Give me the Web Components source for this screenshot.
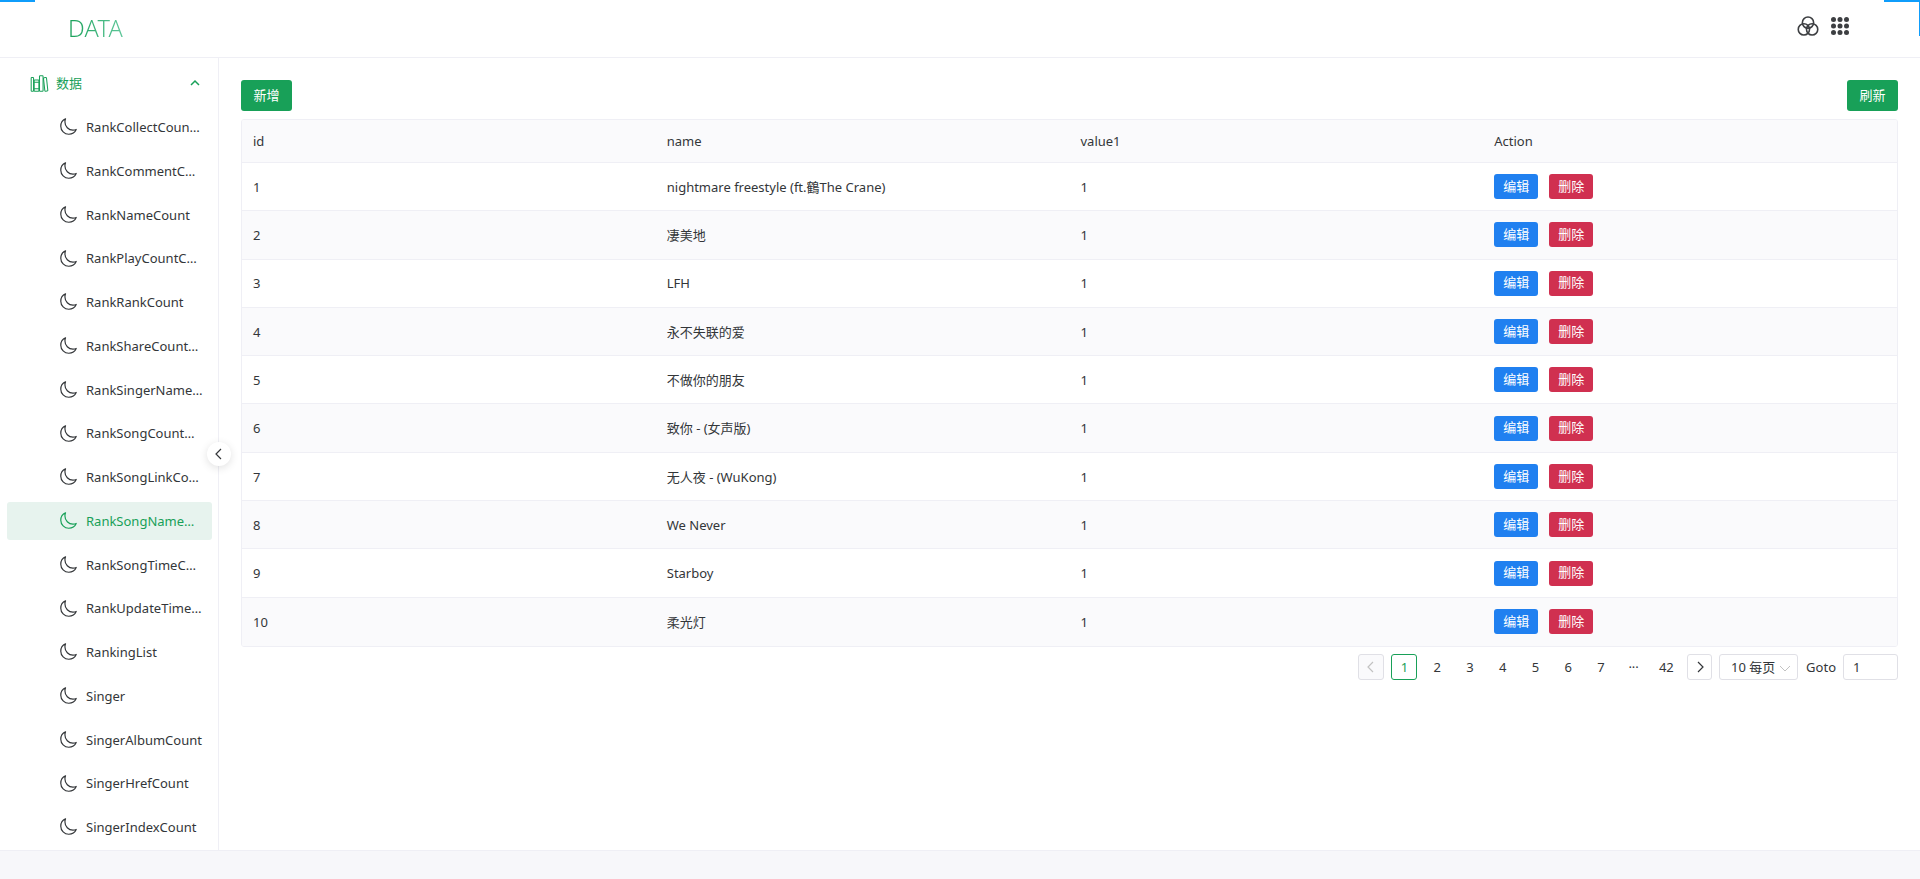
<!DOCTYPE html>
<html lang="zh">
<head>
<meta charset="utf-8">
<title>DATA</title>
<style>
  html, body { margin: 0; height: 100%; overflow: hidden; background: #fff; }
  body { font: 13px/1.5 "Noto Sans", "Noto Sans CJK SC", sans-serif; color: #333639; }
</style>
</head>
<body>
<app-shell></app-shell>
<script>
const MOON = '<path fill="none" stroke="currentColor" stroke-linecap="round" stroke-linejoin="round" stroke-width="32" d="M160 136c0-30.62 4.51-61.61 16-88C99.57 81.27 48 159.32 48 248c0 119.29 96.71 216 216 216c88.68 0 166.73-51.57 200-128c-26.39 11.49-57.38 16-88 16c-119.29 0-216-96.71-216-216z"/>';

const MENU_ITEMS = [
    'RankCollectCountCount', 'RankCommentCount', 'RankNameCount', 'RankPlayCountCount',
    'RankRankCount', 'RankShareCountCount', 'RankSingerNameCount', 'RankSongCountCount',
    'RankSongLinkCount', 'RankSongNameCount', 'RankSongTimeCount', 'RankUpdateTimeCount',
    'RankingList', 'Singer', 'SingerAlbumCount', 'SingerHrefCount', 'SingerIndexCount'
];

// These cut off a letter earlier than the others in the original
const NARROW_ITEMS = ['RankCommentCount', 'RankSongCountCount', 'RankSongNameCount'];

const ROWS = [
    [1, 'nightmare freestyle (ft.鶴The Crane)'], [2, '凄美地'], [3, 'LFH'], [4, '永不失联的爱'],
    [5, '不做你的朋友'], [6, '致你 - (女声版)'], [7, '无人夜 - (WuKong)'], [8, 'We Never'],
    [9, 'Starboy'], [10, '柔光灯']
];

// Small button, colour comes from the type attribute
class NButton extends HTMLElement {
    constructor() {
        super();
        this.attachShadow({ mode: 'open' });
        this.shadowRoot.innerHTML = `
            <style>
                :host {
                    display: inline-flex;
                    align-items: center;
                    justify-content: center;
                    width: 44px;
                    height: 25px;
                    border-radius: 3px;
                    color: #fff;
                    background: #18a058;
                    font-size: 13px;
                }
                :host([type=info]) { background: #2080f0; }
                :host([type=error]) { background: #d03050; }
                :host([size=large]) { width: 51px; height: 31px; }
            </style>
            <slot></slot>
        `;
    }
}
customElements.define('n-button', NButton);

class AppHeader extends HTMLElement {
    constructor() {
        super();
        this.attachShadow({ mode: 'open' });
        const dots = [];
        for (let y = 0; y < 3; y++) {
            for (let x = 0; x < 3; x++) {
                dots.push(`<circle cx="${2.5 + x * 6.5}" cy="${2.5 + y * 6.5}" r="2.5"/>`);
            }
        }
        this.shadowRoot.innerHTML = `
            <style>
                :host {
                    display: flex;
                    align-items: center;
                    height: 57px;
                    padding: 0 71px 0 68px;
                    border-bottom: 1px solid #efeff5;
                    background: #fff;
                }
                .logo {
                    margin-bottom: 2px;
                    font-size: 23.5px;
                    font-weight: 300;
                    letter-spacing: .3px;
                    line-height: 32px;
                    background: linear-gradient(90deg, #18a058, #5fc79a);
                    -webkit-background-clip: text;
                    background-clip: text;
                    color: transparent;
                }
                .tools { display: flex; align-items: center; gap: 11px; margin: 0 0 5px auto; color: #3d3f42; }
                svg { display: block; }
            </style>
            <div class="logo">DATA</div>
            <div class="tools">
                <svg width="24" height="24" viewBox="0 0 512 512" fill="none" stroke="currentColor" stroke-width="34">
                    <circle cx="256" cy="184" r="120"/><circle cx="344" cy="328" r="120"/><circle cx="168" cy="328" r="120"/>
                    <path d="M256 236l40 62h-80z" fill="currentColor" fill-opacity=".3" stroke="none"/>
                </svg>
                <svg width="18" height="18" viewBox="0 0 18 18" fill="currentColor">${dots.join('')}</svg>
            </div>
        `;
    }
}
customElements.define('app-header', AppHeader);

class MenuItem extends HTMLElement {
    constructor() {
        super();
        this.attachShadow({ mode: 'open' });
        this.shadowRoot.innerHTML = `
            <style>
                :host {
                    display: flex;
                    align-items: center;
                    flex: none;
                    height: 38px;
                    margin: 0 6px 5.75px 7px;
                    padding-left: 52px;
                    border-radius: 3px;
                    color: #333639;
                }
                :host([active]) { background: #e7f3ee; color: #18a058; }
                :host([narrow]) span { width: 112px; }
                svg { flex: none; margin-right: 8px; }
                span { overflow: hidden; white-space: nowrap; text-overflow: ellipsis; width: 117.5px; padding-top: 2px; }
            </style>
            <svg width="19" height="19" viewBox="0 0 512 512">${MOON}</svg>
            <span><slot></slot></span>
        `;
    }
}
customElements.define('menu-item', MenuItem);

class AppSidebar extends HTMLElement {
    constructor() {
        super();
        this.attachShadow({ mode: 'open' });
        this.shadowRoot.innerHTML = `
            <style>
                :host {
                    display: block;
                    position: relative;
                    width: 218px;
                    border-right: 1px solid #efeff5;
                    background: #fff;
                }
                .scroll { display: flex; flex-direction: column; height: 100%; padding-top: 6px; box-sizing: border-box; overflow: hidden; }
                .group {
                    display: flex;
                    align-items: center;
                    flex: none;
                    height: 38px;
                    margin-bottom: 5.75px;
                    padding: 0 17px 0 30px;
                    color: #18a058;
                }
                .group .icon { margin-right: 7px; }
                .group .chev { margin-left: auto; }
                .group span { padding-top: 1px; }
                .toggle {
                    position: absolute;
                    top: 384px;
                    right: -13px;
                    display: flex;
                    align-items: center;
                    justify-content: center;
                    width: 24px;
                    height: 24px;
                    border-radius: 50%;
                    background: #fff;
                    box-shadow: 0 2px 8px rgba(0,0,0,.12);
                    color: #333639;
                }
            </style>
            <div class="scroll">
                <div class="group">
                    <svg class="icon" width="19" height="19" viewBox="0 0 512 512" fill="none" stroke="currentColor" stroke-width="28" stroke-linejoin="round">
                        <rect x="32" y="96" width="64" height="368" rx="16"/>
                        <path d="M112 224h128M112 400h128"/>
                        <rect x="112" y="160" width="128" height="304" rx="16"/>
                        <rect x="256" y="48" width="96" height="416" rx="16"/>
                        <path d="M422.46 96.11l-40.4 4.25c-11.12 1.17-19.18 11.57-17.93 23.1l34.92 321.59c1.26 11.53 11.37 20 22.49 18.84l40.4-4.25c11.12-1.17 19.18-11.57 17.93-23.1L445 115c-1.31-11.58-11.42-20.06-22.54-18.89z"/>
                    </svg>
                    <span>数据</span>
                    <svg class="chev" width="12" height="12" viewBox="0 0 12 12" fill="none" stroke="currentColor" stroke-width="1.5"><path d="M2 8l4-4 4 4"/></svg>
                </div>
                <slot></slot>
            </div>
            <div class="toggle">
                <svg width="14" height="14" viewBox="0 0 14 14" fill="none" stroke="currentColor" stroke-width="1.2"><path d="M9 2L4 7l5 5"/></svg>
            </div>
        `;
    }
}
customElements.define('app-sidebar', AppSidebar);

class DataTable extends HTMLElement {
    constructor() {
        super();
        this.attachShadow({ mode: 'open' });
        const rows = ROWS.map(([id, name]) => `
            <div class="row">
                <div class="cell">${id}</div>
                <div class="cell">${name}</div>
                <div class="cell">1</div>
                <div class="actions"><n-button type="info">编辑</n-button><n-button type="error">删除</n-button></div>
            </div>`).join('');
        this.shadowRoot.innerHTML = `
            <style>
                :host {
                    display: block;
                    border: 1px solid #efeff5;
                    border-radius: 3px;
                    overflow: hidden;
                }
                .row, .head {
                    display: grid;
                    grid-template-columns: repeat(4, 1fr);
                    align-items: center;
                    box-sizing: border-box;
                    border-bottom: 1px solid #efeff5;
                }
                .row { height: 48.3px; }
                .row:last-child { border-bottom: 0; }
                .row:nth-child(even) { background: #fafafc; }
                .head { height: 43px; background: #fafafc; }
                .cell { padding: 2px 12px 0 11px; }
                .actions { display: flex; gap: 11px; padding-left: 11px; }
            </style>
            <div class="head"><div class="cell">id</div><div class="cell">name</div><div class="cell">value1</div><div class="cell">Action</div></div>
            <div class="body">${rows}</div>
        `;
    }
}
customElements.define('data-table', DataTable);

class PageBar extends HTMLElement {
    constructor() {
        super();
        this.attachShadow({ mode: 'open' });
        const pages = ['1', '2', '3', '4', '5', '6', '7', '···', '42'];
        const items = pages.map((p, i) => `<div class="item${i === 0 ? ' current' : ''}">${p}</div>`).join('');
        this.shadowRoot.innerHTML = `
            <style>
                :host {
                    display: flex;
                    justify-content: flex-end;
                    align-items: center;
                    height: 26px;
                    margin-top: 7px;
                }
                .item, .box {
                    display: flex;
                    align-items: center;
                    box-sizing: border-box;
                    height: 26px;
                    border-radius: 3px;
                    padding-top: 2px;
                }
                .item { justify-content: center; width: 26px; margin-right: 6.75px; }
                .current { border: 1px solid #18a058; color: #18a058; }
                .box { border: 1px solid #e0e0e6; }
                .arrow { justify-content: center; width: 26px; color: #333639; padding-top: 0; }
                .prev { margin-right: 7px; background: #fafafc; color: #c2c2c2; }
                .next { width: 25px; margin: 0 7px 0 1px; }
                .select { width: 79px; padding-left: 11px; white-space: nowrap; }
                .select svg { margin-left: 4px; color: #c2c2c2; }
                .goto { margin: 0 7px 0 8px; padding-top: 2px; }
                .input { width: 55px; padding-left: 9px; }
            </style>
            <div class="box arrow prev"><svg width="12" height="12" viewBox="0 0 12 12" fill="none" stroke="currentColor" stroke-width="1.2"><path d="M8 1L3 6l5 5"/></svg></div>
            ${items}
            <div class="box arrow next"><svg width="12" height="12" viewBox="0 0 12 12" fill="none" stroke="currentColor" stroke-width="1.2"><path d="M4 1l5 5-5 5"/></svg></div>
            <div class="box select">10 每页<svg width="12" height="12" viewBox="0 0 12 12" fill="none" stroke="currentColor" stroke-width="1"><path d="M1 4l5 5 5-5"/></svg></div>
            <div class="goto">Goto</div>
            <div class="box input">1</div>
        `;
    }
}
customElements.define('page-bar', PageBar);

class AppShell extends HTMLElement {
    constructor() {
        super();
        this.attachShadow({ mode: 'open' });
        const menu = MENU_ITEMS.map(name => {
            const active = name === 'RankSongNameCount' ? ' active' : '';
            const narrow = NARROW_ITEMS.includes(name) ? ' narrow' : '';
            return `<menu-item${active}${narrow}>${name}</menu-item>`;
        }).join('');
        this.shadowRoot.innerHTML = `
            <style>
                :host {
                    display: grid;
                    grid-template-rows: 58px 1fr 29px;
                    height: 879px;
                    position: relative;
                }
                .middle { display: flex; min-height: 0; }
                .main { flex: 1; min-width: 0; padding: 22px 22px 0; }
                .toolbar { display: flex; justify-content: space-between; margin-bottom: 8px; }
                .footer { border-top: 1px solid #efeff5; background: #f7f7fa; }
                .edge { position: absolute; background: #0f9dfb; }
                .e1 { left: 0; top: 0; width: 35px; height: 2px; }
                .e2 { right: 0; top: 0; width: 36px; height: 2px; }
                .e3 { right: 0; top: 0; width: 1px; height: 36px; }
            </style>
            <app-header></app-header>
            <div class="middle">
                <app-sidebar>${menu}</app-sidebar>
                <div class="main">
                    <div class="toolbar">
                        <n-button size="large">新增</n-button>
                        <n-button size="large">刷新</n-button>
                    </div>
                    <data-table></data-table>
                    <page-bar></page-bar>
                </div>
            </div>
            <div class="footer"></div>
            <div class="edge e1"></div>
            <div class="edge e2"></div>
            <div class="edge e3"></div>
        `;
    }
}
customElements.define('app-shell', AppShell);
</script>
</body>
</html>
